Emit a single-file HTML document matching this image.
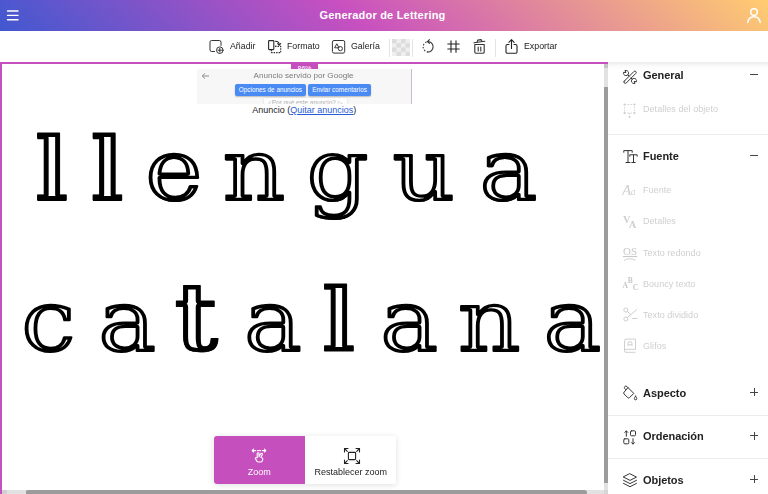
<!DOCTYPE html>
<html lang="es">
<head>
<meta charset="utf-8">
<title>Generador de Lettering</title>
<style>
*{box-sizing:border-box;margin:0;padding:0}
html,body{width:768px;height:494px;overflow:hidden;background:#fff;font-family:"Liberation Sans",sans-serif;color:#222}
#hdr{position:absolute;left:0;top:0;width:768px;height:31px;background:linear-gradient(43deg,#4158D0 0%,#C850C0 46%,#FFCC70 100%)}
#hdr .title{position:absolute;left:0;right:3px;top:9px;text-align:center;color:#fff;font-weight:bold;font-size:11px;line-height:13px;letter-spacing:.2px}
#tb{position:absolute;left:0;top:31px;width:768px;height:31px;background:#fff}
#tb .lbl{position:absolute;top:10px;font-size:8.800px;line-height:11px;color:#222}
#tb svg{position:absolute}
.sep{position:absolute;top:8px;width:1px;height:18px;background:#e3e3e3}
#cv{position:absolute;left:0;top:62px;width:608px;height:432px;background:#fff;border-top:2px solid #c64fbe;border-left:2px solid #c64fbe;overflow:hidden}
#side{position:absolute;left:608px;top:62px;width:160px;height:432px;background:linear-gradient(to bottom,rgba(0,0,0,.075),rgba(0,0,0,.02) 4px,rgba(0,0,0,0) 8px) #fff}

#cv .ad{position:absolute;left:195px;top:5px;width:215px;height:35px;background:#f7f7f7;border-right:1px solid #cbb9d6;overflow:hidden}
#cv .ad .t{position:absolute;left:0;right:0;top:2px;text-align:center;font-size:8.100px;line-height:10px;color:#7a7a7a;padding-right:1px}
#cv .ad .b{position:absolute;top:15px;height:12.300px;border-radius:2px;background:#4a8af4;color:#fff;font-size:6.400px;line-height:12.300px;white-space:nowrap;text-align:center;box-shadow:0 1px 1.500px rgba(0,0,0,.25)}
#cv .ad .w{position:absolute;left:66.500px;top:29.400px;width:83.500px;height:10px;background:#fdfdfd;color:#b0b0b0;font-size:6.400px;line-height:10.500px;white-space:nowrap;text-align:center;box-shadow:0 0 2px rgba(0,0,0,.12)}
#cv .tab{position:absolute;left:289px;top:0;width:27px;height:5.500px;background:#c64fbe;color:#fff;font-size:7px;line-height:9px;text-align:center;overflow:hidden}
#cv .rm{position:absolute;left:-.7px;width:604px;top:40.600px;text-align:center;font-size:9px;line-height:11px;color:#222;padding-left:2px}
#cv .rm a{color:#2a5ad6;text-decoration:underline}
#vs{position:absolute;left:601.500px;top:0;width:4.300px;height:426px;background:#e2e2e2}
#vs i{position:absolute;left:0;top:0;width:100%;height:4px;background:#c4c4c4}
#vs b{position:absolute;left:0;top:23px;width:100%;height:396px;background:#9c9c9c}
#hs{position:absolute;left:0;top:425.500px;width:601.500px;height:5px;background:#e2e2e2}
#hs i{position:absolute;left:0;top:0;width:5px;height:100%;background:#d0d0d0}
#hs b{position:absolute;left:23.500px;top:0;width:561px;height:100%;background:#9c9c9c;border-radius:1.500px 2.500px 2.500px 1.500px}
#crn{position:absolute;left:601.500px;top:425.500px;width:4.300px;height:5px;background:#d6d6d6}
#zm{position:absolute;left:212px;top:372px;width:182px;height:48px;border-radius:3px;background:#fff;box-shadow:0 1px 6px rgba(0,0,0,.13)}
#zm .a{position:absolute;left:0;top:0;width:90.500px;height:48px;background:#c64fbe;border-radius:3px 0 0 3px}
#zm span{position:absolute;top:30.600px;font-size:9px;line-height:11px;text-align:center}
#zm svg{position:absolute}
#side .h{position:absolute;left:35px;font-weight:bold;font-size:11px;line-height:13px;color:#222;letter-spacing:-.05px}
#side .it{position:absolute;left:35px;font-size:9px;letter-spacing:.05px;line-height:11px;color:#cfcfcf}
#side .dv{position:absolute;left:0;width:160px;height:1px;background:#ececec}
#side svg{position:absolute;left:14px}
#side .pm{position:absolute;left:142px;width:8px;height:9px}
#side .pm:before{content:"";position:absolute;left:0;top:4px;width:8px;height:1px;background:#444}
#side .pm.p:after{content:"";position:absolute;left:3.500px;top:.5px;width:1px;height:8px;background:#444}
.L{font-family:"DejaVu Serif",serif;font-size:86.5px;text-anchor:middle}.B{font-family:"DejaVu Serif Condensed",serif;font-weight:bold;font-size:88px}.T{font-size:95px}
#tb .lbl,#side .h,#side .it,#zm span,.ad .t{will-change:transform}
</style>
</head>
<body>
<div id="hdr">
  <svg style="position:absolute;left:6px;top:9px" width="14" height="13" viewBox="0 0 14 13"><g stroke="#fff" stroke-width="1.4" stroke-linecap="round"><line x1="1.5" y1="2" x2="12" y2="2"/><line x1="1.5" y1="6.4" x2="12" y2="6.4"/><line x1="1.5" y1="10.8" x2="12" y2="10.8"/></g></svg>
  <div class="title">Generador de Lettering</div>
  <svg style="position:absolute;left:745.800px;top:6.800px" width="16" height="17" viewBox="0 0 16 17"><g fill="none" stroke="#fff" stroke-width="1.5" stroke-linecap="round"><circle cx="8" cy="5" r="3.3"/><path d="M1.8 15.5c.6-4 3-5.8 6.2-5.8s5.600 1.800 6.200 5.800"/></g></svg>
</div>
<div id="tb">
  <svg style="left:208px;top:7px" width="17" height="17" viewBox="0 0 17 17"><g fill="none" stroke="#333" stroke-width="1" stroke-linecap="round" stroke-linejoin="round"><path d="M6.500 13.500H3.600a1.600 1.600 0 0 1-1.600-1.600V4.100a1.600 1.600 0 0 1 1.600-1.600h7.800a1.600 1.600 0 0 1 1.600 1.600v3.400"/><circle cx="11.800" cy="12.200" r="3.300"/><path d="M11.800 10.400v3.600M10 12.200h3.600"/></g></svg>
  <span class="lbl" style="left:229.500px">Añadir</span>
  <svg style="left:266px;top:7px" width="17" height="17" viewBox="0 0 17 17"><g fill="none" stroke="#2a2a2a" stroke-width="1.100" stroke-linejoin="round"><rect x="2.600" y="2.600" width="5.200" height="9" rx=".6"/><path d="M5.400 11.800v2.800h9.300V8.400H8" stroke-dasharray="1.500 1"/><path d="M9.300 3.300c2.300 0 3.900 1.300 3.900 3.500" stroke-linecap="round"/><path d="M11.700 5.600l1.500 1.500 1.500-1.500" stroke-linecap="round"/></g></svg>
  <span class="lbl" style="left:286.500px">Formato</span>
  <svg style="left:330px;top:7px" width="17" height="17" viewBox="0 0 17 17"><g fill="none" stroke="#333" stroke-width="1" stroke-linejoin="round"><rect x="2.400" y="2.500" width="12.300" height="12.600" rx="1.600"/><path d="M4.600 9.800l2.200-4 2.200 4z"/><circle cx="10.300" cy="10.600" r="2.100"/></g></svg>
  <span class="lbl" style="left:351px">Galería</span>
  <div class="sep" style="left:389px"></div>
  <svg style="left:392px;top:8px" width="18" height="17" viewBox="0 0 18 17"><rect width="18" height="17" fill="#efefef"/><g fill="#dcdcdc"><rect x="0" y="0" width="4.500" height="4.250"/><rect x="9" y="0" width="4.500" height="4.250"/><rect x="4.500" y="4.250" width="4.500" height="4.250"/><rect x="13.500" y="4.250" width="4.500" height="4.250"/><rect x="0" y="8.500" width="4.500" height="4.250"/><rect x="9" y="8.500" width="4.500" height="4.250"/><rect x="4.500" y="12.750" width="4.500" height="4.250"/><rect x="13.500" y="12.750" width="4.500" height="4.250"/></g></svg>
  <div class="sep" style="left:412px"></div>
  <svg style="left:420px;top:7px" width="17" height="17" viewBox="0 0 17 17"><g fill="none" stroke="#333" stroke-width="1.100" stroke-linecap="round" stroke-linejoin="round"><path d="M8 3.600a5.200 5.200 0 1 1-.2 10.400"/><path d="M7.800 14a5.200 5.200 0 0 1-.3-10.300" stroke-dasharray=".700 2.450"/><path d="M9.400 1.700L7.500 3.600l1.900 1.800"/></g></svg>
  <svg style="left:445px;top:7px" width="17" height="17" viewBox="0 0 17 17"><g fill="none" stroke="#222" stroke-width="1.100" stroke-linecap="round"><path d="M6 2.800v11.400M11 2.800v11.400M2.800 6h11.400M2.800 11h11.400"/></g></svg>
  <svg style="left:471px;top:7px" width="17" height="17" viewBox="0 0 17 17"><g fill="none" stroke="#333" stroke-width="1.100" stroke-linecap="round" stroke-linejoin="round"><path d="M3 4.800l10.800-1.600"/><path d="M6.300 3.600l.4-1.500 3.400-.5.700 1.300"/><path d="M3.800 6.500h9.400v7.400a1.400 1.400 0 0 1-1.400 1.400H5.200a1.400 1.400 0 0 1-1.400-1.400z"/><path d="M7.200 9v4M9.800 9v4"/></g></svg>
  <div class="sep" style="left:495px"></div>
  <svg style="left:503px;top:7px" width="17" height="17" viewBox="0 0 17 17"><g fill="none" stroke="#222" stroke-width="1.100" stroke-linecap="round" stroke-linejoin="round"><path d="M6 6.500H4.400a1.400 1.400 0 0 0-1.400 1.400v6a1.400 1.400 0 0 0 1.400 1.400h8.200a1.400 1.400 0 0 0 1.400-1.400v-6a1.400 1.400 0 0 0-1.400-1.400H11"/><path d="M8.500 10.500V1.800M5.900 4.300l2.600-2.600 2.600 2.600"/></g></svg>
  <span class="lbl" style="left:524px">Exportar</span>
</div>
<div id="cv">
  <div class="tab">86%</div>
  <div class="ad">
    <svg style="position:absolute;left:4px;top:3px" width="9" height="8" viewBox="0 0 9 8"><path d="M8 4H1.500M4 1.300L1.300 4 4 6.700" fill="none" stroke="#8a8a8a" stroke-width="1"/></svg>
    <div class="t">Anuncio servido por Google</div>
    <div class="b" style="left:38px;width:70.800px">Opciones de anuncios</div>
    <div class="b" style="left:111.300px;width:62.500px">Enviar comentarios</div>
    <div class="w">¿Por qué este anuncio? ▷</div>
  </div>
  <div class="rm">Anuncio (<a>Quitar anuncios</a>)</div>
  <svg id="let" style="position:absolute;left:-2px;top:-2px" width="604" height="430" viewBox="0 62 604 430">
    <defs>
      <clipPath id="k1"><text class="L" x="45.58 94.69 153.98 224.78 298.76 374.96 450" y="200.5"><tspan class="B">ll</tspan>engua</text></clipPath>
      <clipPath id="k2"><text class="L" x="42.74 112.57 173.81 241.5 299.65 362.04 432.92 506.46" y="351">ca<tspan class="B T">t</tspan>a<tspan class="B">l</tspan>ana</text></clipPath>
    </defs>
    <g stroke-linejoin="round" transform="scale(1.13,1)">
      <g fill="#000" stroke="#000" stroke-width="2.2">
        <text class="L" x="45.58 94.69 153.98 224.78 298.76 374.96 450" y="200.5"><tspan class="B" stroke-width="0.8">ll</tspan>engua</text>
        <text class="L" x="42.74 112.57 173.81 241.5 299.65 362.04 432.92 506.46" y="351">ca<tspan class="B T" stroke-width="0.8">t</tspan>a<tspan class="B" stroke-width="0.8">l</tspan>ana</text>
      </g>
      <g fill="#fff" stroke="#000" stroke-width="4.6">
        <text class="L" clip-path="url(#k1)" x="45.58 94.69 153.98 224.78 298.76 374.96 450" y="200.5"><tspan class="B" stroke-width="8.0">ll</tspan>engua</text>
        <text class="L" clip-path="url(#k2)" x="42.74 112.57 173.81 241.5 299.65 362.04 432.92 506.46" y="351">ca<tspan class="B T" stroke-width="8.0">t</tspan>a<tspan class="B" stroke-width="8.0">l</tspan>ana</text>
      </g>
    </g>
  </svg>
  <div id="zm">
    <div class="a"></div>
    <svg style="left:37px;top:12px" width="16" height="15" viewBox="0 0 16 15"><g fill="none" stroke="#fff" stroke-width="1.100" stroke-linecap="round" stroke-linejoin="round"><path d="M1.200 2.600h3.600M2.600 1.200L1.200 2.600l1.400 1.400"/><path d="M14.800 2.600h-3.600M13.400 1.200l1.400 1.400-1.400 1.400"/><path d="M6.600 2.600h.9M8.600 2.600h.9" /><path d="M6.200 9.800V5.600a.9.900 0 0 1 1.800 0v3.200l1.700-3a.9.900 0 0 1 1.600.9L9.900 9.300l1 .4c.8.400 1 1.100.8 1.900l-.4 1.200c-.3.800-1 1.200-1.800 1.200H7.600c-.7 0-1.300-.3-1.700-.9l-1.500-2.400a.9.900 0 0 1 1.400-1z"/></g></svg>
    <span style="left:0;width:90.500px;color:#fff">Zoom</span>
    <svg style="left:129px;top:11px" width="18" height="18" viewBox="0 0 18 18"><g fill="none" stroke="#222" stroke-width="1.100" stroke-linecap="round" stroke-linejoin="round"><rect x="5.400" y="5.400" width="7.200" height="7.200" rx=".8"/><path d="M1.500 5V1.500H5M1.500 1.500l2.800 2.800"/><path d="M16.500 5V1.500H13M16.500 1.500l-2.800 2.800"/><path d="M1.500 13v3.500H5M1.500 16.500l2.800-2.800"/><path d="M16.500 13v3.500H13M16.500 16.500l-2.800-2.800"/></g></svg>
    <span style="left:90.500px;width:91.500px;color:#222">Restablecer zoom</span>
  </div>
  <div id="vs"><i></i><b></b></div>
  <div id="hs"><i></i><b></b></div>
  <div id="crn"></div>
</div>
<div id="side">
  <svg style="top:6.500px" width="16" height="16" viewBox="0 0 16 16"><g fill="none" stroke="#333" stroke-width="1" stroke-linecap="round" stroke-linejoin="round"><path d="M2.300 12.100L11.900 2.500a1.300 1.300 0 0 1 1.900 1.900L4.200 14a1.300 1.300 0 0 1-1.900-1.900z"/><path d="M3.330 1.490A2.600 2.600 0 1 1 1.490 3.330L3.500 3.500z"/><path d="M12.670 14.510A2.600 2.600 0 1 1 14.510 12.670L12.500 12.500z"/><path d="M5.900 5.900l1.200 1.200M9 9l1.200 1.200"/></g></svg>
  <div class="h" style="top:7.4px">General</div><div class="pm" style="top:8px"></div>
  <svg style="top:39.500px" width="16" height="17" viewBox="0 0 16 17"><g fill="none" stroke="#d4d4d4" stroke-width="1" stroke-dasharray="1.600 1.400"><rect x="2.500" y="2.500" width="10" height="8.500"/><path d="M7.500 11v4"/></g><g fill="#cfcfcf"><circle cx="2.500" cy="2.500" r="1.100"/><circle cx="12.500" cy="2.500" r="1.100"/><circle cx="2.500" cy="11" r="1.100"/><circle cx="12.500" cy="11" r="1.100"/><circle cx="7.500" cy="15" r="1.100"/></g></svg>
  <div class="it" style="top:41.9px">Detalles del objeto</div>
  <div class="dv" style="top:72px"></div>
  <svg style="top:86px" width="17" height="17" viewBox="0 0 17 17"><g fill="none" stroke="#333" stroke-width="1" stroke-linecap="round"><path d="M1.800 4.300V2.600h8.400v1.700M6 2.600v11.800M4 14.500h4"/><path d="M7.800 8.200V6.800h7.400v1.400M11.500 6.800v7.600M9.800 14.500h3.400"/></g></svg>
  <div class="h" style="top:87.9px">Fuente</div><div class="pm" style="top:88.500px"></div>
  <svg style="top:119px" width="18" height="17" viewBox="0 0 18 17"><text x="0" y="13.500" font-family="Liberation Serif,serif" font-style="italic" font-size="15" fill="#cfcfcf">A<tspan font-size="9.500" dx="-.5">a</tspan></text></svg>
  <div class="it" style="top:122.9px">Fuente</div>
  <svg style="top:151px" width="18" height="17" viewBox="0 0 18 17"><text font-family="Liberation Serif,serif" font-weight="bold" font-size="10.500" fill="#cfcfcf"><tspan x="1" y="10">V</tspan><tspan x="6.800" y="14.500">A</tspan></text></svg>
  <div class="it" style="top:154.1px">Detalles</div>
  <svg style="top:182px" width="18" height="18" viewBox="0 0 18 18"><text x="1" y="11" font-family="Liberation Serif,serif" font-size="11" fill="#c8c8c8" text-decoration="underline">OS</text><path d="M2 16.500c3.500-2.200 8-2.200 11.500 0" fill="none" stroke="#cfcfcf" stroke-width="1"/></svg>
  <div class="it" style="top:185.9px">Texto redondo</div>
  <svg style="top:213px" width="18" height="18" viewBox="0 0 18 18"><text font-family="Liberation Serif,serif" font-weight="bold" font-size="7.500" fill="#c8c8c8"><tspan x=".5" y="13">A</tspan><tspan x="5.800" y="8">B</tspan><tspan x="10.800" y="14.500">C</tspan></text></svg>
  <div class="it" style="top:217.3px">Bouncy texto</div>
  <svg style="top:244px" width="18" height="18" viewBox="0 0 18 18"><g fill="none" stroke="#cfcfcf" stroke-width="1"><circle cx="3.800" cy="4" r="2"/><circle cx="3.800" cy="13" r="2"/><path d="M5.300 5.400L9 9M5.300 11.600L15 3.500M10 12.500h5.500" /></g></svg>
  <div class="it" style="top:247.9px">Texto dividido</div>
  <svg style="top:275px" width="18" height="18" viewBox="0 0 18 18"><g fill="none" stroke="#cfcfcf" stroke-width="1"><path d="M2.500 13.800V3.600a1.500 1.500 0 0 1 1.500-1.500h9.500v10.200H4a1.500 1.500 0 0 0 0 3h9.500"/><path d="M6 9V6.500a2 2 0 0 1 4 0V9M6 7.800h4"/></g></svg>
  <div class="it" style="top:279.2px">Glifos</div>
  <svg style="top:323px" width="17" height="17" viewBox="0 0 17 17"><g fill="none" stroke="#333" stroke-width="1" stroke-linejoin="round" stroke-linecap="round"><path d="M6.200 2.800l5.600 5.600-4.300 4.300a1.200 1.200 0 0 1-1.700 0L2 8.900a1.200 1.200 0 0 1 0-1.700z"/><path d="M6.200 2.800L4.800 1.400a1.500 1.500 0 0 0-2.100 2.100l1.100 1.100"/><path d="M13.600 11.200c.8 1.100 1.200 1.800 1.200 2.400a1.200 1.200 0 0 1-2.400 0c0-.6.400-1.300 1.200-2.400z"/></g></svg>
  <div class="h" style="top:324.9px">Aspecto</div><div class="pm p" style="top:325.500px"></div>
  <div class="dv" style="top:353px"></div>
  <svg style="top:366.500px" width="17" height="17" viewBox="0 0 17 17"><g fill="none" stroke="#333" stroke-width="1" stroke-linecap="round" stroke-linejoin="round"><rect x="8.500" y="1.800" width="5" height="5" rx="1"/><rect x="1.800" y="9.800" width="5" height="5" rx="1"/><path d="M4.300 7.300V2M2.800 3.400L4.300 1.900l1.500 1.500"/><path d="M11 9.700v5.300M9.500 13.600l1.500 1.500 1.500-1.500"/></g></svg>
  <div class="h" style="top:368.4px">Ordenación</div><div class="pm p" style="top:369px"></div>
  <div class="dv" style="top:396px"></div>
  <svg style="top:409.500px" width="17" height="17" viewBox="0 0 17 17"><g fill="none" stroke="#333" stroke-width="1" stroke-linejoin="round" stroke-linecap="round"><path d="M8 1.800l6.500 3.300L8 8.400 1.500 5.100z"/><path d="M1.500 8.300L8 11.600l6.500-3.300"/><path d="M1.500 11.400L8 14.700l6.500-3.300"/></g></svg>
  <div class="h" style="top:411.9px">Objetos</div><div class="pm p" style="top:412.500px"></div>
</div>
</body>
</html>
